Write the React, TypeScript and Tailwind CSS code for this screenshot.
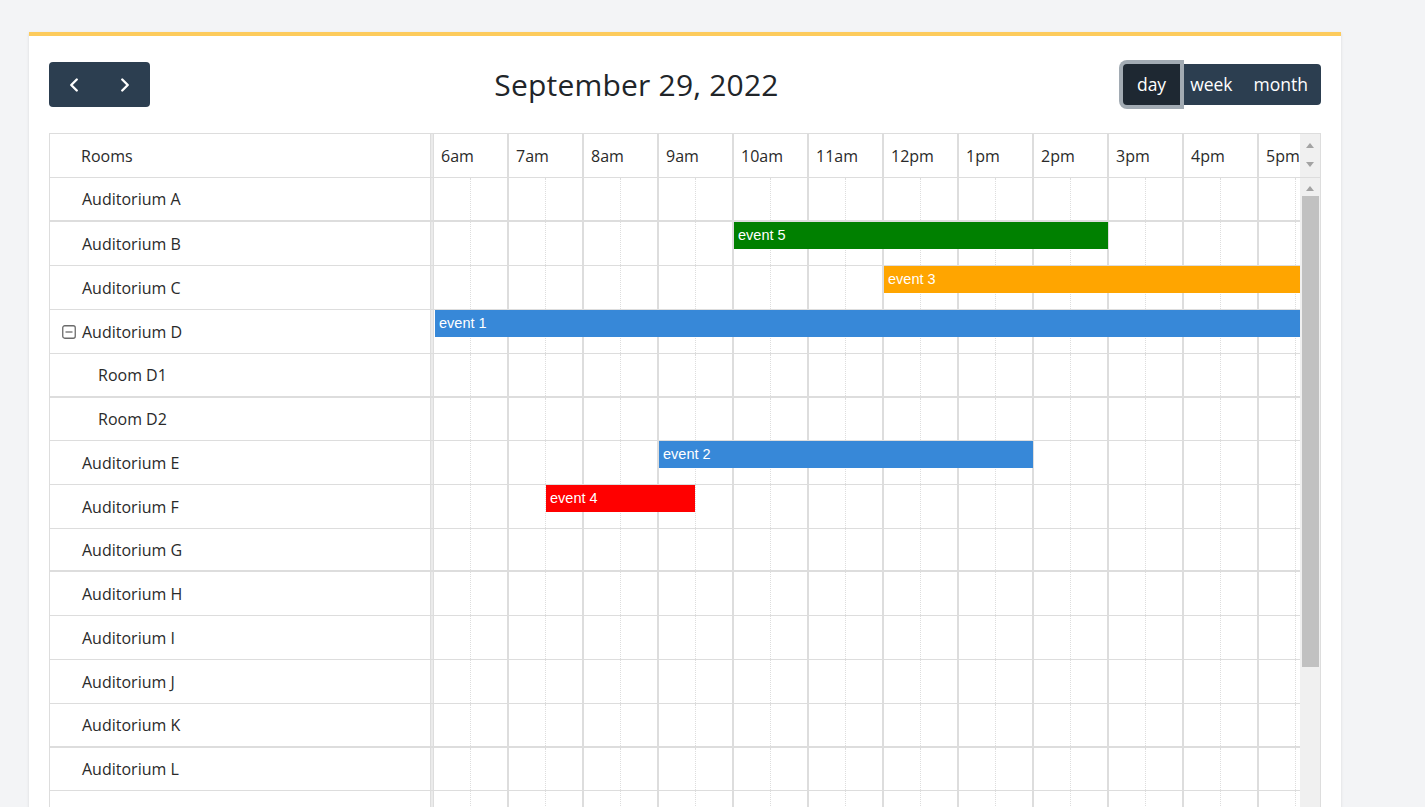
import { ChevronLeft, ChevronRight } from 'lucide-react'

type Row = { name: string; h: number; thick?: boolean; indent?: boolean; toggle?: boolean }

const ROWS: Row[] = [
  { name: 'Auditorium A', h: 44, thick: true },
  { name: 'Auditorium B', h: 44 },
  { name: 'Auditorium C', h: 44 },
  { name: 'Auditorium D', h: 44, toggle: true },
  { name: 'Room D1', h: 44, thick: true, indent: true },
  { name: 'Room D2', h: 43, indent: true },
  { name: 'Auditorium E', h: 44 },
  { name: 'Auditorium F', h: 44 },
  { name: 'Auditorium G', h: 43, thick: true },
  { name: 'Auditorium H', h: 44 },
  { name: 'Auditorium I', h: 44 },
  { name: 'Auditorium J', h: 44 },
  { name: 'Auditorium K', h: 44, thick: true },
  { name: 'Auditorium L', h: 43 },
  { name: 'Auditorium M', h: 44 },
  { name: 'Auditorium N', h: 44 },
]

const HOURS = ['6am', '7am', '8am', '9am', '10am', '11am', '12pm', '1pm', '2pm', '3pm', '4pm', '5pm']

// left / width in px from 6am, 75px per hour
const EVENTS: Record<string, { title: string; left: number; width: number; color: string }> = {
  'Auditorium B': { title: 'event 5', left: 300, width: 374, color: 'bg-[#008000]' },
  'Auditorium C': { title: 'event 3', left: 450, width: 600, color: 'bg-[#ffa500]' },
  'Auditorium D': { title: 'event 1', left: 1, width: 1000, color: 'bg-[#3788d8]' },
  'Auditorium E': { title: 'event 2', left: 225, width: 374, color: 'bg-[#3788d8]' },
  'Auditorium F': { title: 'event 4', left: 112, width: 149, color: 'bg-[#ff0000]' },
}

const font = { fontFamily: '"Open Sans", "Noto Sans", sans-serif' }

function SlotLines() {
  return (
    <div className="absolute inset-0 flex">
      {HOURS.map((h) => (
        <div key={h} className="w-[75px] shrink-0 h-full border-r-2 border-[#dddddd] flex">
          <div className="w-[37px] h-full border-r border-dotted border-[#dddddd]" />
        </div>
      ))}
    </div>
  )
}

function Divider() {
  return <div className="w-[4px] shrink-0 bg-[#ebebeb] border-x border-[#dddddd]" />
}

function Arrow({ up }: { up?: boolean }) {
  return (
    <svg width="8" height="5" viewBox="0 0 8 5">
      <polygon points={up ? '0,5 4,0 8,5' : '0,0 4,5 8,0'} fill="#a3a3a3" />
    </svg>
  )
}

export default function App() {
  return (
    <div className="min-h-screen bg-[#f3f4f6] pt-[32px] text-[#2a2a2a]" style={font}>
      <div className="ml-[29px] w-[1312px] bg-white border-t-4 border-[#fdcb5c] shadow-sm px-[20px] pt-[26px] pb-[40px]">
        <div className="flex items-center justify-between h-[45px] mb-[26px]">
          <div className="flex h-[45px] w-[101px] rounded-[4px] bg-[#2c3e50] text-white">
            <button className="flex-1 flex items-center justify-center">
              <ChevronLeft size={22} strokeWidth={2.6} />
            </button>
            <button className="flex-1 flex items-center justify-center">
              <ChevronRight size={22} strokeWidth={2.6} />
            </button>
          </div>
          <h2 className="text-[30px] text-[#212529] tracking-[0.2px]">September 29, 2022</h2>
          <div className="flex h-[41px] rounded-[4px] bg-[#2c3e50] text-white text-[17.5px]">
            <button className="px-[14px] bg-[#1e2832] rounded-l-[4px] ring-4 ring-[#a2abb3]">day</button>
            <button className="px-[10px]">week</button>
            <button className="pl-[11px] pr-[13px]">month</button>
          </div>
        </div>

        <div className="border border-[#dddddd]">
          <div className="flex h-[44px] border-b border-[#dddddd]">
            <div className="w-[380px] shrink-0 flex items-center pl-[31px] text-[16px]">Rooms</div>
            <Divider />
            <div className="flex-1 relative overflow-hidden flex">
              {HOURS.map((h) => (
                <div key={h} className="w-[75px] shrink-0 h-full border-r-2 border-[#dddddd] flex items-center pl-[7px] text-[16px]">
                  {h}
                </div>
              ))}
            </div>
            <div className="w-[20px] shrink-0 bg-[#f0f0f0] flex flex-col items-center pt-[9px] gap-[14px]">
              <Arrow up />
              <Arrow />
            </div>
          </div>

          <div className="flex h-[700px] overflow-hidden">
            <div className="flex-1 flex flex-col">
              {ROWS.map((r) => {
                const ev = EVENTS[r.name]
                return (
                  <div
                    key={r.name}
                    className={`flex shrink-0 border-[#dddddd] ${r.thick ? 'border-b-2' : 'border-b'}`}
                    style={{ height: r.h }}
                  >
                    <div className={`w-[380px] shrink-0 flex items-center text-[16px] ${r.indent ? 'pl-[48px]' : 'pl-[32px]'}`}>
                      {r.toggle && (
                        <svg width="14" height="14" viewBox="0 0 14 14" className="-ml-[20px] mr-[6px]">
                          <rect x="0.75" y="0.75" width="12.5" height="12.5" rx="2" fill="none" stroke="#6b6b6b" strokeWidth="1.3" />
                          <line x1="3.5" y1="7" x2="10.5" y2="7" stroke="#6b6b6b" strokeWidth="1.3" />
                        </svg>
                      )}
                      {r.name}
                    </div>
                    <Divider />
                    <div className="flex-1 relative overflow-hidden">
                      <SlotLines />
                      {ev && (
                        <div
                          className={`absolute top-0 h-[27px] flex items-center pl-[4px] text-white text-[14.5px] ${ev.color}`}
                          style={{ left: ev.left, width: ev.width, fontFamily: '"Liberation Sans", Arial, sans-serif' }}
                        >
                          {ev.title}
                        </div>
                      )}
                    </div>
                  </div>
                )
              })}
            </div>
            <div className="w-[20px] shrink-0 bg-[#f0f0f0] flex flex-col items-center pt-[8px]">
              <Arrow up />
              <div className="mt-[5px] w-[17px] h-[471px] bg-[#c1c1c1]" />
            </div>
          </div>
        </div>
      </div>
    </div>
  )
}
